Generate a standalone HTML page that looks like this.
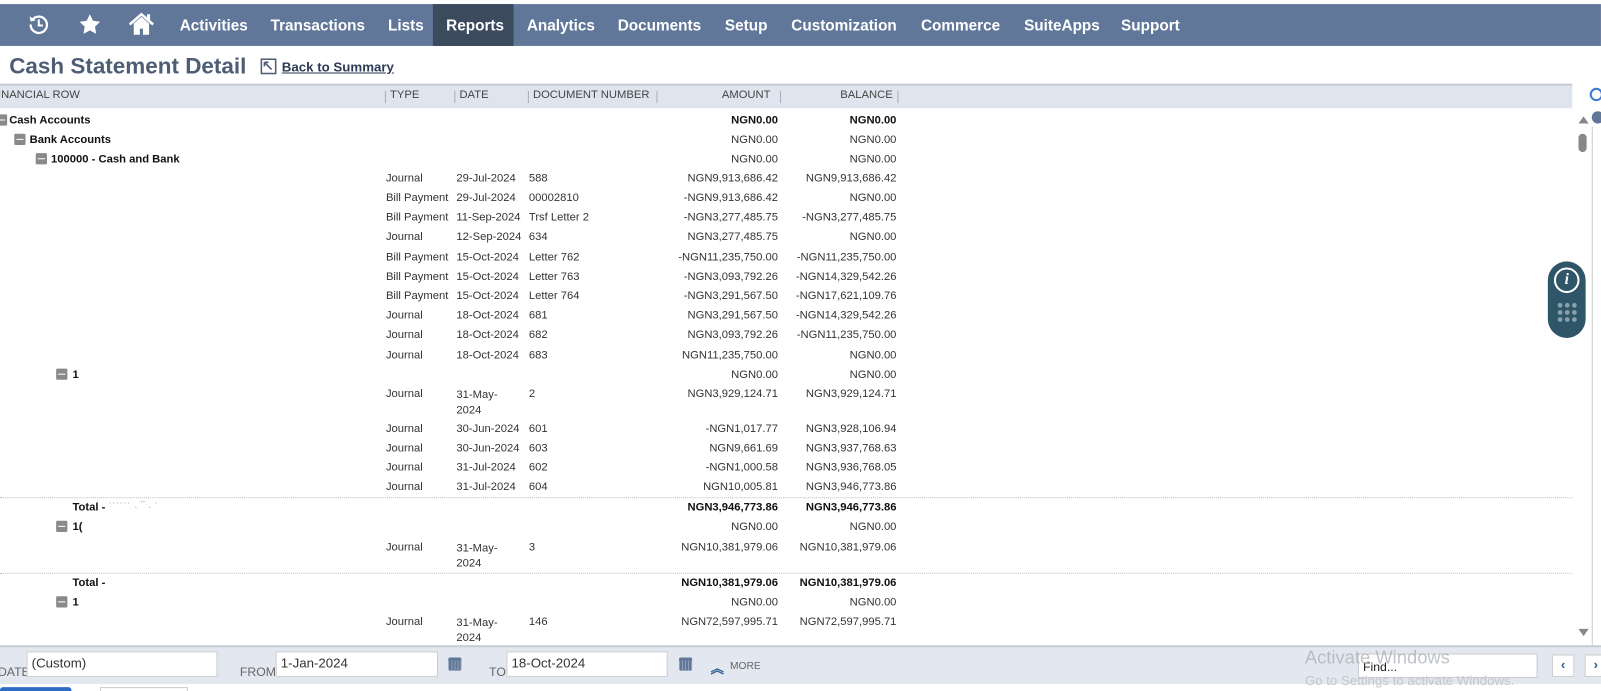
<!DOCTYPE html>
<html><head><meta charset="utf-8"><style>
*{margin:0;padding:0;box-sizing:border-box}
body{width:1601px;height:690px;overflow:hidden;background:#fff;font-family:"Liberation Sans",sans-serif;color:#333}
#w{position:absolute;left:0;top:0;width:1568px;height:676px;transform:scale(1.021);transform-origin:0 0}
.a{position:absolute;white-space:nowrap}
.nav{position:absolute;left:0;top:4px;width:1568px;height:41px;background:#607799}
.nav .i{position:absolute;top:13px;color:#fff;font-weight:bold;font-size:15px}
.rep{position:absolute;left:424px;top:0;width:79px;height:41px;background:#3c4a5e}
.hdr{position:absolute;left:0;top:82px;width:1540px;height:24px;background:#dfe5ee;border-top:2px solid #c8cdd4}
.hdr span{position:absolute;top:3px;font-size:11px;color:#444}
.sep{position:absolute;top:5px;width:1px;height:12px;background:#aab}
.r{position:absolute;font-size:11px;line-height:13px;color:#333;white-space:nowrap}
.b{font-weight:bold;color:#111}
.rt{text-align:right}
.mn{position:absolute;width:11px;height:11px;background:#8a8a8a;border-radius:1px}
.mn:after{content:"";position:absolute;left:2px;top:5px;width:7px;height:1px;background:#fff}
.dot{position:absolute;left:0;width:1540px;border-top:1px dotted #bbb}
.foot{position:absolute;left:0;top:632px;width:1568px;height:38px;background:#e3e8f0;border-top:2px solid #c8cdd4}
.inp{position:absolute;height:25px;background:#fff;border:1px solid #ccc;font-size:13px;padding:3px 4px;color:#333}
.lbl{position:absolute;font-size:12px;color:#666}
.cal{position:absolute;width:13px;height:13px;background:#607799;border-radius:2px;background-image:linear-gradient(#607799 3px,transparent 3px),repeating-linear-gradient(90deg,#8fa0b8 0 1px,transparent 1px 3px)}
</style></head><body><div id="w">
<div class="nav">
<div class="rep"></div>
<svg class="a" style="left:27px;top:9px" width="22" height="22" viewBox="0 0 22 22"><path d="M5 6A8 8 0 1 1 3 11" fill="none" stroke="#fff" stroke-width="2.2"/><path d="M2 3l1 5 5-1" fill="#fff"/><path d="M11 6v6h4" fill="none" stroke="#fff" stroke-width="2"/></svg>
<svg class="a" style="left:77px;top:9px" width="22" height="22" viewBox="0 0 24 24"><path d="M12 1l3.4 7 7.6 1-5.5 5.3 1.3 7.7L12 18.3 5.2 22l1.3-7.7L1 9l7.6-1z" fill="#fff"/></svg>
<svg class="a" style="left:126px;top:8px" width="25" height="24" viewBox="0 0 25 24"><path d="M1 12L12.5 2 24 12" fill="none" stroke="#fff" stroke-width="2.5"/><path d="M5 11v11h6v-6h3v6h6V11L12.5 4.5z" fill="#fff"/><rect x="18" y="2" width="3" height="6" fill="#fff"/></svg>
<span class="i" style="left:176px">Activities</span>
<span class="i" style="left:265px">Transactions</span>
<span class="i" style="left:380px">Lists</span>
<span class="i" style="left:437px">Reports</span>
<span class="i" style="left:516px">Analytics</span>
<span class="i" style="left:605px">Documents</span>
<span class="i" style="left:710px">Setup</span>
<span class="i" style="left:775px">Customization</span>
<span class="i" style="left:902px">Commerce</span>
<span class="i" style="left:1003px">SuiteApps</span>
<span class="i" style="left:1098px">Support</span>
</div>
<div class="a" style="left:9px;top:52px;font-size:22px;font-weight:bold;color:#4c5d74">Cash Statement Detail</div>
<svg class="a" style="left:255px;top:57px" width="16" height="16" viewBox="0 0 16 16"><rect x="1" y="1" width="14" height="14" fill="none" stroke="#4c5d74" stroke-width="1.5"/><path d="M4 4l7 7M4 4h4M4 4v4" stroke="#4c5d74" stroke-width="1.6" fill="none"/></svg>
<div class="a" style="left:276px;top:58px;font-size:13px;font-weight:bold;color:#2b3a55;text-decoration:underline">Back to Summary</div>
<div class="hdr">
<span style="left:-2px">INANCIAL ROW</span>
<div class="sep" style="left:377px"></div><span style="left:382px">TYPE</span>
<div class="sep" style="left:445px"></div><span style="left:450px">DATE</span>
<div class="sep" style="left:517px"></div><span style="left:522px">DOCUMENT NUMBER</span>
<div class="sep" style="left:643px"></div><span style="left:707px">AMOUNT</span>
<div class="sep" style="left:764px"></div><span style="left:823px">BALANCE</span>
<div class="sep" style="left:879px"></div>
</div>
<div class="a" style="left:1557px;top:86px;width:13px;height:13px;border-radius:50%;border:2px solid #3d7bd6;"></div>
<div class="a" style="left:1559px;top:109px;width:12px;height:12px;border-radius:50%;background:#607799"></div>
<div class="a" style="left:1559px;top:124px;width:1px;height:508px;background:#ccc"></div>
<div class="a" style="left:1546px;top:114px;width:0;height:0;border-left:5px solid transparent;border-right:5px solid transparent;border-bottom:7px solid #888"></div>
<div class="a" style="left:1546px;top:131px;width:8px;height:18px;border-radius:4px;background:#888"></div>
<div class="a" style="left:1546px;top:616px;width:0;height:0;border-left:5px solid transparent;border-right:5px solid transparent;border-top:7px solid #888"></div>
<div class="a" style="left:1516px;top:256px;width:37px;height:75px;border-radius:19px;background:#2f5568"></div>
<div class="a" style="left:1522px;top:262px;width:25px;height:25px;border-radius:50%;border:2px solid #fff;color:#fff;font:italic bold 15px 'Liberation Serif',serif;text-align:center;line-height:21px">i</div>
<svg class="a" style="left:1524px;top:295px" width="22" height="22"><g fill="#8aa0ad"><circle cx="4" cy="4" r="2.3"/><circle cx="11" cy="4" r="2.3"/><circle cx="18" cy="4" r="2.3"/><circle cx="4" cy="11" r="2.3"/><circle cx="11" cy="11" r="2.3"/><circle cx="18" cy="11" r="2.3"/><circle cx="4" cy="18" r="2.3"/><circle cx="11" cy="18" r="2.3"/><circle cx="18" cy="18" r="2.3"/></g></svg>

<div class="mn" style="left:-4px;top:112px"></div><div class="r b" style="left:9px;top:112px">Cash Accounts</div>
<div class="mn" style="left:14px;top:131px"></div><div class="r b" style="left:29px;top:131px">Bank Accounts</div>
<div class="mn" style="left:35px;top:150px"></div><div class="r b" style="left:50px;top:150px">100000 - Cash and Bank</div>
<div class="mn" style="left:55px;top:361px"></div><div class="r b" style="left:71px;top:361px">1</div>
<div class="dot" style="top:487px"></div>
<div class="r b" style="left:71px;top:491px">Total - <span style="color:#aaa;font-weight:normal">˙˙˙˙˙˙ · ‾ · ˙</span></div>
<div class="mn" style="left:55px;top:510px"></div><div class="r b" style="left:71px;top:510px">1(</div>
<div class="dot" style="top:561px"></div>
<div class="r b" style="left:71px;top:565px">Total -</div>
<div class="mn" style="left:55px;top:584px"></div><div class="r b" style="left:71px;top:584px">1</div>

<div class="r b rt" style="left:600px;width:162px;top:112px">NGN0.00</div><div class="r b rt" style="left:700px;width:178px;top:112px">NGN0.00</div>
<div class="r rt" style="left:600px;width:162px;top:131px">NGN0.00</div><div class="r rt" style="left:700px;width:178px;top:131px">NGN0.00</div>
<div class="r rt" style="left:600px;width:162px;top:150px">NGN0.00</div><div class="r rt" style="left:700px;width:178px;top:150px">NGN0.00</div>

<div class="r" style="left:378px;top:169px">Journal</div><div class="r" style="left:447px;top:169px">29-Jul-2024</div><div class="r" style="left:518px;top:169px">588</div><div class="r rt" style="left:600px;width:162px;top:169px">NGN9,913,686.42</div><div class="r rt" style="left:700px;width:178px;top:169px">NGN9,913,686.42</div>
<div class="r" style="left:378px;top:188px">Bill Payment</div><div class="r" style="left:447px;top:188px">29-Jul-2024</div><div class="r" style="left:518px;top:188px">00002810</div><div class="r rt" style="left:600px;width:162px;top:188px">-NGN9,913,686.42</div><div class="r rt" style="left:700px;width:178px;top:188px">NGN0.00</div>
<div class="r" style="left:378px;top:207px">Bill Payment</div><div class="r" style="left:447px;top:207px">11-Sep-2024</div><div class="r" style="left:518px;top:207px">Trsf Letter 2</div><div class="r rt" style="left:600px;width:162px;top:207px">-NGN3,277,485.75</div><div class="r rt" style="left:700px;width:178px;top:207px">-NGN3,277,485.75</div>
<div class="r" style="left:378px;top:226px">Journal</div><div class="r" style="left:447px;top:226px">12-Sep-2024</div><div class="r" style="left:518px;top:226px">634</div><div class="r rt" style="left:600px;width:162px;top:226px">NGN3,277,485.75</div><div class="r rt" style="left:700px;width:178px;top:226px">NGN0.00</div>
<div class="r" style="left:378px;top:246px">Bill Payment</div><div class="r" style="left:447px;top:246px">15-Oct-2024</div><div class="r" style="left:518px;top:246px">Letter 762</div><div class="r rt" style="left:600px;width:162px;top:246px">-NGN11,235,750.00</div><div class="r rt" style="left:700px;width:178px;top:246px">-NGN11,235,750.00</div>
<div class="r" style="left:378px;top:265px">Bill Payment</div><div class="r" style="left:447px;top:265px">15-Oct-2024</div><div class="r" style="left:518px;top:265px">Letter 763</div><div class="r rt" style="left:600px;width:162px;top:265px">-NGN3,093,792.26</div><div class="r rt" style="left:700px;width:178px;top:265px">-NGN14,329,542.26</div>
<div class="r" style="left:378px;top:284px">Bill Payment</div><div class="r" style="left:447px;top:284px">15-Oct-2024</div><div class="r" style="left:518px;top:284px">Letter 764</div><div class="r rt" style="left:600px;width:162px;top:284px">-NGN3,291,567.50</div><div class="r rt" style="left:700px;width:178px;top:284px">-NGN17,621,109.76</div>
<div class="r" style="left:378px;top:303px">Journal</div><div class="r" style="left:447px;top:303px">18-Oct-2024</div><div class="r" style="left:518px;top:303px">681</div><div class="r rt" style="left:600px;width:162px;top:303px">NGN3,291,567.50</div><div class="r rt" style="left:700px;width:178px;top:303px">-NGN14,329,542.26</div>
<div class="r" style="left:378px;top:322px">Journal</div><div class="r" style="left:447px;top:322px">18-Oct-2024</div><div class="r" style="left:518px;top:322px">682</div><div class="r rt" style="left:600px;width:162px;top:322px">NGN3,093,792.26</div><div class="r rt" style="left:700px;width:178px;top:322px">-NGN11,235,750.00</div>
<div class="r" style="left:378px;top:342px">Journal</div><div class="r" style="left:447px;top:342px">18-Oct-2024</div><div class="r" style="left:518px;top:342px">683</div><div class="r rt" style="left:600px;width:162px;top:342px">NGN11,235,750.00</div><div class="r rt" style="left:700px;width:178px;top:342px">NGN0.00</div>
<div class="r rt" style="left:600px;width:162px;top:361px">NGN0.00</div><div class="r rt" style="left:700px;width:178px;top:361px">NGN0.00</div>
<div class="r" style="left:378px;top:380px">Journal</div><div class="r" style="left:447px;top:380px;line-height:15px">31-May-<br>2024</div><div class="r" style="left:518px;top:380px">2</div><div class="r rt" style="left:600px;width:162px;top:380px">NGN3,929,124.71</div><div class="r rt" style="left:700px;width:178px;top:380px">NGN3,929,124.71</div>
<div class="r" style="left:378px;top:414px">Journal</div><div class="r" style="left:447px;top:414px">30-Jun-2024</div><div class="r" style="left:518px;top:414px">601</div><div class="r rt" style="left:600px;width:162px;top:414px">-NGN1,017.77</div><div class="r rt" style="left:700px;width:178px;top:414px">NGN3,928,106.94</div>
<div class="r" style="left:378px;top:433px">Journal</div><div class="r" style="left:447px;top:433px">30-Jun-2024</div><div class="r" style="left:518px;top:433px">603</div><div class="r rt" style="left:600px;width:162px;top:433px">NGN9,661.69</div><div class="r rt" style="left:700px;width:178px;top:433px">NGN3,937,768.63</div>
<div class="r" style="left:378px;top:452px">Journal</div><div class="r" style="left:447px;top:452px">31-Jul-2024</div><div class="r" style="left:518px;top:452px">602</div><div class="r rt" style="left:600px;width:162px;top:452px">-NGN1,000.58</div><div class="r rt" style="left:700px;width:178px;top:452px">NGN3,936,768.05</div>
<div class="r" style="left:378px;top:471px">Journal</div><div class="r" style="left:447px;top:471px">31-Jul-2024</div><div class="r" style="left:518px;top:471px">604</div><div class="r rt" style="left:600px;width:162px;top:471px">NGN10,005.81</div><div class="r rt" style="left:700px;width:178px;top:471px">NGN3,946,773.86</div>
<div class="r b rt" style="left:600px;width:162px;top:491px">NGN3,946,773.86</div><div class="r b rt" style="left:700px;width:178px;top:491px">NGN3,946,773.86</div>
<div class="r rt" style="left:600px;width:162px;top:510px">NGN0.00</div><div class="r rt" style="left:700px;width:178px;top:510px">NGN0.00</div>
<div class="r" style="left:378px;top:530px">Journal</div><div class="r" style="left:447px;top:530px;line-height:15px">31-May-<br>2024</div><div class="r" style="left:518px;top:530px">3</div><div class="r rt" style="left:600px;width:162px;top:530px">NGN10,381,979.06</div><div class="r rt" style="left:700px;width:178px;top:530px">NGN10,381,979.06</div>
<div class="r b rt" style="left:600px;width:162px;top:565px">NGN10,381,979.06</div><div class="r b rt" style="left:700px;width:178px;top:565px">NGN10,381,979.06</div>
<div class="r rt" style="left:600px;width:162px;top:584px">NGN0.00</div><div class="r rt" style="left:700px;width:178px;top:584px">NGN0.00</div>
<div class="r" style="left:378px;top:603px">Journal</div><div class="r" style="left:447px;top:603px;line-height:15px">31-May-<br>2024</div><div class="r" style="left:518px;top:603px">146</div><div class="r rt" style="left:600px;width:162px;top:603px">NGN72,597,995.71</div><div class="r rt" style="left:700px;width:178px;top:603px">NGN72,597,995.71</div>

<div class="foot">
<div class="lbl" style="left:-2px;top:17px">DATE</div>
<div class="inp" style="left:26px;top:4px;width:187px">(Custom)</div>
<div class="lbl" style="left:235px;top:17px">FROM</div>
<div class="inp" style="left:270px;top:4px;width:159px">1-Jan-2024</div>
<div class="cal" style="left:439px;top:10px"></div>
<div class="lbl" style="left:479px;top:17px">TO</div>
<div class="inp" style="left:496px;top:4px;width:158px">18-Oct-2024</div>
<div class="cal" style="left:665px;top:10px"></div>
<div class="a" style="left:696px;top:10px;font-size:13px;color:#2c5a8c;font-weight:bold">︽</div>
<div class="lbl" style="left:715px;top:13px;font-size:10px">MORE</div>
<div class="inp" style="left:1330px;top:6px;width:176px;height:24px;color:#222;font-size:12px;padding-top:5px">Find...</div>
<div class="a" style="left:1278px;top:0px;font-size:18px;color:rgba(170,175,182,0.75)">Activate Windows</div>
<div class="inp" style="left:1520px;top:7px;width:22px;height:22px;color:#2a5a9c;font-weight:bold;text-align:center;padding:1px">‹</div>
<div class="inp" style="left:1552px;top:7px;width:22px;height:22px;color:#2a5a9c;font-weight:bold;text-align:center;padding:1px">›</div>
</div>
<div class="a" style="left:1278px;top:659px;font-size:13px;color:#c3c6cb">Go to Settings to activate Windows.</div>
<div class="a" style="left:0;top:673px;width:70px;height:4px;background:#2d6bc4;border-radius:3px 3px 0 0"></div>
<div class="a" style="left:98px;top:673px;width:86px;height:4px;border:1px solid #ccc;border-bottom:none"></div>
</div></body></html>
